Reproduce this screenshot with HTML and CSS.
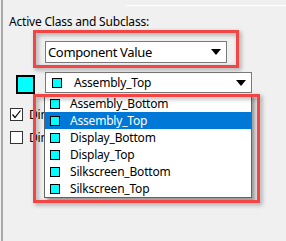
FILE: index.html
```html
<!DOCTYPE html>
<html>
<head>
<meta charset="utf-8">
<link rel="stylesheet" href="styles.css">
</head>
<body>
<div class="panel">
  <div class="groupline"></div>
  <div class="label">Active Class and Subclass:</div>
  <div class="combo combo-class">
    <span class="combo-text">Component Value</span>
    <span class="arrow"></span>
  </div>
  <div class="row-sub">
    <span class="swatch-big"></span>
    <div class="combo combo-sub">
      <span class="mini"></span>
      <span class="combo-text sub-text">Assembly_Top</span>
      <span class="arrow"></span>
    </div>
  </div>
  <div class="check-row">
    <span class="checkbox checked"><svg width="11" height="11" viewBox="0 0 11 11"><path d="M1.5 5.5 L4 8.5 L9.5 1.5" fill="none" stroke="#000" stroke-width="1.2"/></svg></span>
    <span class="check-label">Dim</span>
  </div>
  <div class="check-row">
    <span class="checkbox"></span>
    <span class="check-label">Dim</span>
  </div>

  <ul class="droplist">
    <li><span class="mini"></span>Assembly_Bottom</li>
    <li class="selected"><span class="mini"></span>Assembly_Top</li>
    <li><span class="mini"></span>Display_Bottom</li>
    <li><span class="mini"></span>Display_Top</li>
    <li><span class="mini"></span>Silkscreen_Bottom</li>
    <li><span class="mini"></span>Silkscreen_Top</li>
  </ul>

  <div class="mark mark-1"></div>
  <div class="mark mark-2"></div>
</div>
</body>
</html>
```
FILE: styles.css
```css
html, body {
  margin: 0;
  padding: 0;
  background: #f0f0f0;
}
body {
  font-family: "Noto Sans", "Open Sans", sans-serif;
  font-size: 12px;
  letter-spacing: -0.2px;
  color: #000;
  width: 286px;
  height: 241px;
  overflow: hidden;
}
.panel {
  position: relative;
  margin-left: 1px;
  height: 241px;
  border-left: 2px solid #a8a8a8;
  box-sizing: border-box;
  padding-left: 6px;
}
.groupline {
  height: 0;
  margin-left: 117px;
  padding-top: 5px;
  border-bottom: 1px solid #ffffff;
}
.label {
  margin-top: 8px;
  line-height: 16px;
  height: 16px;
}
.combo {
  box-sizing: border-box;
  background: #fff;
  border: 1px solid #7a7a7a;
  display: flex;
  align-items: center;
  position: relative;
}
.combo-class {
  margin-top: 11px;
  margin-left: 36px;
  width: 182px;
  height: 22px;
  padding-left: 2px;
  font-size: 13px;
  letter-spacing: -0.35px;
}
.combo-text {
  flex: 1;
  line-height: 18px;
}
.arrow {
  width: 0;
  height: 0;
  border-left: 5px solid transparent;
  border-right: 5px solid transparent;
  border-top: 6px solid #000;
  margin-right: 5px;
}
.row-sub {
  display: flex;
  align-items: flex-start;
  margin-top: 9px;
}
.swatch-big {
  box-sizing: border-box;
  width: 19px;
  height: 19px;
  background: #00ffff;
  border: 2px solid #000;
  margin-left: 7px;
  margin-top: 3px;
}
.combo-sub {
  margin-left: 10px;
  width: 207px;
  height: 21px;
  padding-left: 6px;
}
.mini {
  box-sizing: border-box;
  display: inline-block;
  width: 10px;
  height: 10px;
  background: #00ffff;
  border: 1px solid #000;
  flex: none;
}
.sub-text {
  margin-left: 12px;
}
.check-row {
  display: flex;
  align-items: center;
  height: 23px;
  margin-left: 1px;
}
.row-sub + .check-row {
  margin-top: 9px;
}
.checkbox {
  box-sizing: border-box;
  width: 13px;
  height: 13px;
  border: 1px solid #333;
  background: #fff;
  display: flex;
  align-items: center;
  justify-content: center;
}
.check-label {
  margin-left: 6px;
}
.droplist {
  position: absolute;
  left: 41px;
  top: 94px;
  width: 208px;
  margin: 0;
  padding: 0;
  list-style: none;
  background: #fff;
  border: 1px solid #646464;
  box-sizing: border-box;
  box-shadow: 3px 3px 3px rgba(0, 0, 0, 0.35);
}
.droplist li {
  height: 17px;
  display: flex;
  align-items: center;
  padding-left: 5px;
  gap: 10px;
  line-height: 17px;
}
.droplist li.selected {
  background: #0078d7;
  color: #fff;
}
.mark {
  position: absolute;
  box-sizing: border-box;
  border: 3px solid #f44545;
  filter: drop-shadow(2px 2px 2px rgba(0, 0, 0, 0.35));
}
.mark-1 {
  left: 30px;
  top: 30px;
  width: 206px;
  height: 38px;
}
.mark-2 {
  left: 30px;
  top: 94px;
  width: 227px;
  height: 109px;
}
```
